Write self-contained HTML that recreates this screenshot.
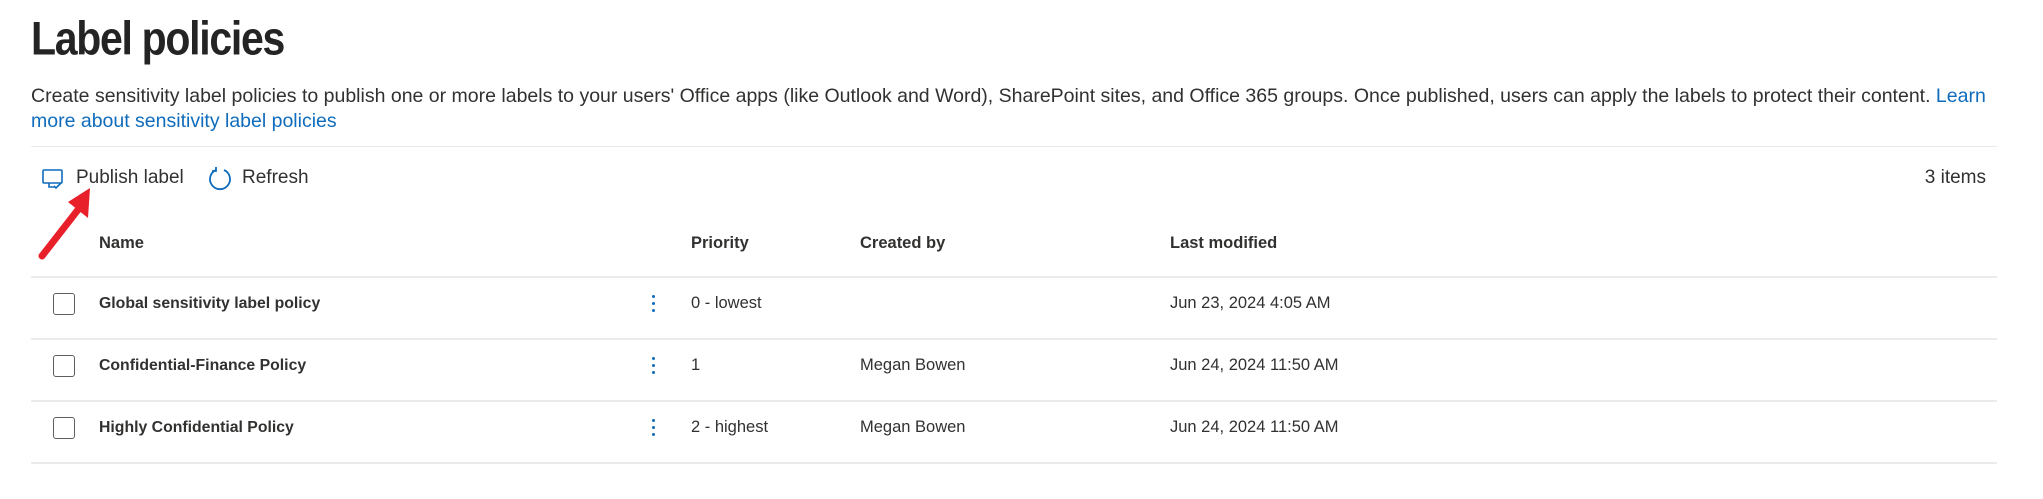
<!DOCTYPE html>
<html><head><style>
body{margin:0;width:2043px;height:499px;background:#fff;font-family:"Liberation Sans",sans-serif;color:#323130;position:relative;overflow:hidden}
.a{position:absolute;white-space:nowrap}
h1{position:absolute;left:31px;top:12px;margin:0;font-size:41px;font-weight:bold;letter-spacing:-1.3px;transform:scaleY(1.15);transform-origin:top left;color:#242424}
.desc{font-size:19.5px;line-height:25px;left:31px;top:84px;color:#323130}
.desc span{color:#0f6cbd}
.line{position:absolute;left:31px;width:1966px;height:2px;background:#edebe9}
.tb{font-size:19px;top:167px}
.hd{font-size:16.5px;font-weight:bold;top:234px}
.r{font-size:16.5px}
.n{font-size:15.8px;font-weight:bold}
.cb{position:absolute;left:53px;width:20px;height:20px;border:1.5px solid #605e5c;border-radius:3px}
.dots{position:absolute;left:652px;width:3px}
.dots i{display:block;width:3px;height:3px;background:#0f6cbd;border-radius:50%;margin-bottom:4px}
</style></head><body>
<h1>Label policies</h1>
<div class="a desc">Create sensitivity label policies to publish one or more labels to your users' Office apps (like Outlook and Word), SharePoint sites, and Office 365 groups. Once published, users can apply the labels to protect their content. <span>Learn</span><br><span>more about sensitivity label policies</span></div>
<div class="line" style="top:146px;height:1px"></div>
<svg class="a" style="left:41px;top:168px" width="24" height="22" viewBox="0 0 24 22" fill="none" stroke="#0f6cbd" stroke-width="1.6"><rect x="2" y="2" width="19" height="13" rx="1"/><path d="M8 15v4h6M13 18l2 2 5-5"/></svg>
<div class="a tb" style="left:76px">Publish label</div>
<svg class="a" style="left:207px;top:166px" width="26" height="26" viewBox="0 0 26 26" fill="none" stroke="#0f6cbd" stroke-width="1.8"><path d="M9 4A10 10 0 1 0 17 4"/><path d="M9 1v4H5"/></svg>
<div class="a tb" style="left:242px">Refresh</div>
<div class="a tb" style="right:57px">3 items</div>
<svg class="a" style="left:30px;top:180px" width="70" height="85"><path d="M12 76L54 22" stroke="#e8202a" stroke-width="7" stroke-linecap="round"/><path d="M60 8L38 22L58 38Z" fill="#e8202a"/></svg>
<div class="a hd" style="left:99px">Name</div>
<div class="a hd" style="left:691px">Priority</div>
<div class="a hd" style="left:860px">Created by</div>
<div class="a hd" style="left:1170px">Last modified</div>
<div class="line" style="top:276px"></div>
<div class="cb" style="top:293px"></div>
<div class="a n" style="left:99px;top:295px">Global sensitivity label policy</div>
<div class="dots" style="top:295px"><i></i><i></i><i></i></div>
<div class="a r" style="left:691px;top:294px">0 - lowest</div>
<div class="a r" style="left:1170px;top:294px">Jun 23, 2024 4:05 AM</div>
<div class="line" style="top:338px"></div>
<div class="cb" style="top:355px"></div>
<div class="a n" style="left:99px;top:357px">Confidential-Finance Policy</div>
<div class="dots" style="top:357px"><i></i><i></i><i></i></div>
<div class="a r" style="left:691px;top:356px">1</div>
<div class="a r" style="left:860px;top:356px">Megan Bowen</div>
<div class="a r" style="left:1170px;top:356px">Jun 24, 2024 11:50 AM</div>
<div class="line" style="top:400px"></div>
<div class="cb" style="top:417px"></div>
<div class="a n" style="left:99px;top:419px">Highly Confidential Policy</div>
<div class="dots" style="top:419px"><i></i><i></i><i></i></div>
<div class="a r" style="left:691px;top:418px">2 - highest</div>
<div class="a r" style="left:860px;top:418px">Megan Bowen</div>
<div class="a r" style="left:1170px;top:418px">Jun 24, 2024 11:50 AM</div>
<div class="line" style="top:462px"></div>
</body></html>
